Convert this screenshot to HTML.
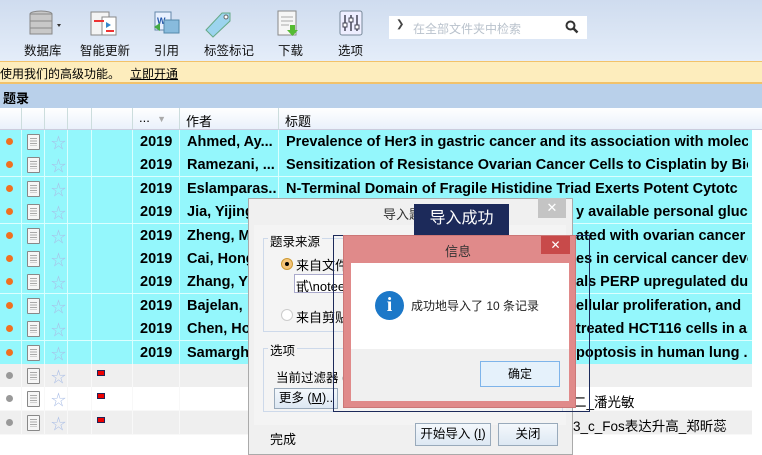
<!DOCTYPE html>
<html><head><meta charset="utf-8"><style>
*{margin:0;padding:0;box-sizing:border-box}
body{width:762px;height:455px;overflow:hidden;position:relative;background:#fff;font-family:"Liberation Sans","Noto Sans CJK SC",sans-serif;font-size:12px;color:#000}
.a{position:absolute}
.tb{left:0;top:0;width:762px;height:61px;background:linear-gradient(#cfdcef,#e4edf9)}
.tl{position:absolute;top:40px;font-size:12.5px;color:#111;white-space:nowrap}
.row{position:absolute;left:0;width:752px;height:24px;border-bottom:1px solid #dcffff;background:#94f7fc}
.g{background:#efefef;border-bottom:1px solid #f8f8f8}
.w{background:#fff;border-bottom:1px solid #f8f8f8}
.c{position:absolute;top:0;height:100%;border-right:1px solid #d8ffff}
.g .c,.w .c{border-color:#f8f8f8}
.t{position:absolute;top:4px;font-weight:bold;font-size:14.5px;white-space:nowrap;overflow:hidden}
.dot{position:absolute;left:6px;top:8px;width:7px;height:7px;border-radius:50%;background:#f07020}
.g .dot,.w .dot{background:#999}
.doc{position:absolute;left:27px;top:4px;width:13px;height:16px;border:1px solid #888;border-radius:1px;background:#f6f6f6}
.doc:after{content:"";position:absolute;left:2px;top:3px;width:7px;height:8px;background:repeating-linear-gradient(#aaa 0 1px,transparent 1px 2.5px)}
.star{position:absolute;left:51px;top:2px;color:#a9bde6;font-size:15px}
.flag{position:absolute;left:97px;top:6px;width:8px;height:6px;background:#e00;border:1px solid #225}
.btn{position:absolute;border:1px solid #9ab;background:linear-gradient(#f4f8fc,#dde8f3);text-align:center;font-size:12px}
</style></head><body>
<div class="a tb"></div>
<svg class="a" style="left:0;top:0" width="380" height="40">
<g fill="#c8c8c8" stroke="#888"><ellipse cx="41" cy="14" rx="11" ry="3"/><rect x="30" y="14" width="22" height="7"/><rect x="30" y="21" width="22" height="7"/><rect x="30" y="28" width="22" height="6"/></g>
<path d="M57 24l4 0-2 3z" fill="#333"/>
<rect x="91" y="12" width="18" height="23" fill="#f4f4f4" stroke="#888"/><rect x="102" y="17" width="14" height="18" fill="#fff" stroke="#888"/><rect x="94" y="20" width="10" height="2" fill="#e33"/><rect x="106" y="30" width="8" height="2" fill="#e33"/><path d="M106 22l5 3-5 3z" fill="#38c"/>
<rect x="155" y="12" width="16" height="18" fill="#e8f0ff" stroke="#68a"/><text x="157" y="24" font-size="9" fill="#25a" font-weight="bold">W</text><rect x="164" y="20" width="15" height="13" fill="#8bd" stroke="#58a"/><path d="M154 27l6 -4v8z" fill="#4a4"/>
<path d="M206 30l16-17 8 0 0 8-17 16z" fill="#9cd4ee" stroke="#6a8"/><circle cx="226" cy="17" r="2" fill="#fff" stroke="#666"/>
<rect x="278" y="11" width="18" height="24" fill="#f6f6f6" stroke="#888"/><path d="M281 17h12M281 21h12M281 25h8" stroke="#aaa"/><path d="M290 25h5v5h3l-5.5 6-5.5-6h3z" fill="#5b3"/>
<rect x="340" y="11" width="22" height="24" rx="2" fill="#eef" stroke="#789"/><path d="M345 15v16M351 15v16M357 15v16" stroke="#445" stroke-width="1.5"/><rect x="343" y="23" width="4" height="4" fill="#fff" stroke="#445"/><rect x="349" y="18" width="4" height="4" fill="#fff" stroke="#445"/><rect x="355" y="25" width="4" height="4" fill="#fff" stroke="#445"/>
</svg>
<div class="tl" style="left:24px">数据库</div>
<div class="tl" style="left:80px">智能更新</div>
<div class="tl" style="left:154px">引用</div>
<div class="tl" style="left:204px">标签标记</div>
<div class="tl" style="left:278px">下载</div>
<div class="tl" style="left:338px">选项</div>
<div class="a" style="left:389px;top:16px;width:198px;height:23px;background:#fff"></div>
<div class="a" style="left:396px;top:19px;color:#444;font-size:10px">&#10095;</div>
<div class="a" style="left:413px;top:20px;color:#b9c2cc;font-size:12px">在全部文件夹中检索</div>
<svg class="a" style="left:565px;top:20px" width="14" height="14"><circle cx="5.5" cy="5.5" r="4" fill="none" stroke="#333" stroke-width="2"/><path d="M8.5 8.5l4 4" stroke="#333" stroke-width="2.5"/></svg>
<div class="a" style="left:0;top:61px;width:762px;height:23px;background:#fdedbd;border-top:1px solid #f2c26a;border-bottom:2px solid #f2c26a"></div>
<div class="a" style="left:0;top:65px;font-size:12px">使用我们的高级功能。 &nbsp;&nbsp;<u>立即开通</u></div>
<div class="a" style="left:0;top:84px;width:762px;height:24px;background:#b9d0ea"></div>
<div class="a" style="left:3px;top:88px;font-weight:bold;font-size:13px">题录</div>
<div class="a" style="left:0;top:108px;width:762px;height:22px;background:linear-gradient(#fff,#eaf1fb);border-bottom:1px solid #ccd">
<div class="c" style="left:0;width:22px;border-color:#cdd"></div><div class="c" style="left:22px;width:23px;border-color:#cdd"></div><div class="c" style="left:45px;width:23px;border-color:#cdd"></div><div class="c" style="left:68px;width:24px;border-color:#cdd"></div><div class="c" style="left:92px;width:41px;border-color:#cdd"></div><div class="c" style="left:133px;width:47px;border-color:#cdd"></div><div class="c" style="left:180px;width:99px;border-color:#cdd"></div>
<div class="a" style="left:139px;top:2px;font-size:13px">... &nbsp;<span style="color:#aaa;font-size:9px">▼</span></div>
<div class="a" style="left:186px;top:3px;font-size:13px">作者</div>
<div class="a" style="left:285px;top:3px;font-size:13px">标题</div>
</div>

<div class="row" style="top:130px"><div class="c" style="left:0;width:22px"></div><div class="c" style="left:22px;width:23px"></div><div class="c" style="left:45px;width:23px"></div><div class="c" style="left:68px;width:24px"></div><div class="c" style="left:92px;width:41px"></div><div class="c" style="left:133px;width:47px"></div><div class="c" style="left:180px;width:99px"></div><div class="dot"></div><div class="doc"></div><div class="star">☆</div><div class="t" style="left:140px">2019</div><div class="t" style="left:187px;width:92px">Ahmed, Ay...</div><div class="t" style="left:286px;width:462px">Prevalence of Her3 in gastric cancer and its association with molec</div></div>
<div class="row" style="top:153px"><div class="c" style="left:0;width:22px"></div><div class="c" style="left:22px;width:23px"></div><div class="c" style="left:45px;width:23px"></div><div class="c" style="left:68px;width:24px"></div><div class="c" style="left:92px;width:41px"></div><div class="c" style="left:133px;width:47px"></div><div class="c" style="left:180px;width:99px"></div><div class="dot"></div><div class="doc"></div><div class="star">☆</div><div class="t" style="left:140px">2019</div><div class="t" style="left:187px;width:92px">Ramezani, ...</div><div class="t" style="left:286px;width:462px">Sensitization of Resistance Ovarian Cancer Cells to Cisplatin by Bio</div></div>
<div class="row" style="top:177px"><div class="c" style="left:0;width:22px"></div><div class="c" style="left:22px;width:23px"></div><div class="c" style="left:45px;width:23px"></div><div class="c" style="left:68px;width:24px"></div><div class="c" style="left:92px;width:41px"></div><div class="c" style="left:133px;width:47px"></div><div class="c" style="left:180px;width:99px"></div><div class="dot"></div><div class="doc"></div><div class="star">☆</div><div class="t" style="left:140px">2019</div><div class="t" style="left:187px;width:92px">Eslamparas..</div><div class="t" style="left:286px;width:462px">N-Terminal Domain of Fragile Histidine Triad Exerts Potent Cytotc</div></div>
<div class="row" style="top:200px"><div class="c" style="left:0;width:22px"></div><div class="c" style="left:22px;width:23px"></div><div class="c" style="left:45px;width:23px"></div><div class="c" style="left:68px;width:24px"></div><div class="c" style="left:92px;width:41px"></div><div class="c" style="left:133px;width:47px"></div><div class="c" style="left:180px;width:99px"></div><div class="dot"></div><div class="doc"></div><div class="star">☆</div><div class="t" style="left:140px">2019</div><div class="t" style="left:187px;width:92px">Jia, Yijing</div><div class="t" style="left:576px;width:172px">y available personal gluc</div></div>
<div class="row" style="top:224px"><div class="c" style="left:0;width:22px"></div><div class="c" style="left:22px;width:23px"></div><div class="c" style="left:45px;width:23px"></div><div class="c" style="left:68px;width:24px"></div><div class="c" style="left:92px;width:41px"></div><div class="c" style="left:133px;width:47px"></div><div class="c" style="left:180px;width:99px"></div><div class="dot"></div><div class="doc"></div><div class="star">☆</div><div class="t" style="left:140px">2019</div><div class="t" style="left:187px;width:92px">Zheng, M</div><div class="t" style="left:576px;width:172px">ated with ovarian cancer</div></div>
<div class="row" style="top:247px"><div class="c" style="left:0;width:22px"></div><div class="c" style="left:22px;width:23px"></div><div class="c" style="left:45px;width:23px"></div><div class="c" style="left:68px;width:24px"></div><div class="c" style="left:92px;width:41px"></div><div class="c" style="left:133px;width:47px"></div><div class="c" style="left:180px;width:99px"></div><div class="dot"></div><div class="doc"></div><div class="star">☆</div><div class="t" style="left:140px">2019</div><div class="t" style="left:187px;width:92px">Cai, Hong</div><div class="t" style="left:576px;width:172px">es in cervical cancer deve</div></div>
<div class="row" style="top:270px"><div class="c" style="left:0;width:22px"></div><div class="c" style="left:22px;width:23px"></div><div class="c" style="left:45px;width:23px"></div><div class="c" style="left:68px;width:24px"></div><div class="c" style="left:92px;width:41px"></div><div class="c" style="left:133px;width:47px"></div><div class="c" style="left:180px;width:99px"></div><div class="dot"></div><div class="doc"></div><div class="star">☆</div><div class="t" style="left:140px">2019</div><div class="t" style="left:187px;width:92px">Zhang, Y</div><div class="t" style="left:576px;width:172px">als PERP upregulated dui</div></div>
<div class="row" style="top:294px"><div class="c" style="left:0;width:22px"></div><div class="c" style="left:22px;width:23px"></div><div class="c" style="left:45px;width:23px"></div><div class="c" style="left:68px;width:24px"></div><div class="c" style="left:92px;width:41px"></div><div class="c" style="left:133px;width:47px"></div><div class="c" style="left:180px;width:99px"></div><div class="dot"></div><div class="doc"></div><div class="star">☆</div><div class="t" style="left:140px">2019</div><div class="t" style="left:187px;width:92px">Bajelan,</div><div class="t" style="left:576px;width:172px">ellular proliferation, and</div></div>
<div class="row" style="top:317px"><div class="c" style="left:0;width:22px"></div><div class="c" style="left:22px;width:23px"></div><div class="c" style="left:45px;width:23px"></div><div class="c" style="left:68px;width:24px"></div><div class="c" style="left:92px;width:41px"></div><div class="c" style="left:133px;width:47px"></div><div class="c" style="left:180px;width:99px"></div><div class="dot"></div><div class="doc"></div><div class="star">☆</div><div class="t" style="left:140px">2019</div><div class="t" style="left:187px;width:92px">Chen, Ho</div><div class="t" style="left:576px;width:172px">treated HCT116 cells in a.</div></div>
<div class="row" style="top:341px"><div class="c" style="left:0;width:22px"></div><div class="c" style="left:22px;width:23px"></div><div class="c" style="left:45px;width:23px"></div><div class="c" style="left:68px;width:24px"></div><div class="c" style="left:92px;width:41px"></div><div class="c" style="left:133px;width:47px"></div><div class="c" style="left:180px;width:99px"></div><div class="dot"></div><div class="doc"></div><div class="star">☆</div><div class="t" style="left:140px">2019</div><div class="t" style="left:187px;width:92px">Samargh</div><div class="t" style="left:576px;width:172px">poptosis in human lung .</div></div>
<div class="row g" style="top:364px"><div class="c" style="left:0;width:22px"></div><div class="c" style="left:22px;width:23px"></div><div class="c" style="left:45px;width:23px"></div><div class="c" style="left:68px;width:24px"></div><div class="c" style="left:92px;width:41px"></div><div class="c" style="left:133px;width:47px"></div><div class="c" style="left:180px;width:99px"></div><div class="dot"></div><div class="doc"></div><div class="star">☆</div><div class="flag"></div></div>
<div class="row w" style="top:387px"><div class="c" style="left:0;width:22px"></div><div class="c" style="left:22px;width:23px"></div><div class="c" style="left:45px;width:23px"></div><div class="c" style="left:68px;width:24px"></div><div class="c" style="left:92px;width:41px"></div><div class="c" style="left:133px;width:47px"></div><div class="c" style="left:180px;width:99px"></div><div class="dot"></div><div class="doc"></div><div class="star">☆</div><div class="flag"></div><div class="a" style="left:573px;top:4px;font-size:13.5px">二_潘光敏</div></div>
<div class="row g" style="top:411px"><div class="c" style="left:0;width:22px"></div><div class="c" style="left:22px;width:23px"></div><div class="c" style="left:45px;width:23px"></div><div class="c" style="left:68px;width:24px"></div><div class="c" style="left:92px;width:41px"></div><div class="c" style="left:133px;width:47px"></div><div class="c" style="left:180px;width:99px"></div><div class="dot"></div><div class="doc"></div><div class="star">☆</div><div class="flag"></div><div class="a" style="left:573px;top:4px;font-size:13.5px">3_c_Fos表达升高_郑昕蕊</div></div>

<div class="a" style="left:248px;top:198px;width:325px;height:257px;background:#f0f0f0;border:1px solid #aaa"></div>
<div class="a" style="left:383px;top:204px;font-size:13px;color:#333">导入题录</div>
<div class="a" style="left:538px;top:198px;width:28px;height:20px;background:#c4c4c4;color:#fff;text-align:center;font-size:13px;line-height:20px">✕</div>
<div class="a" style="left:254px;top:225px;width:312px;height:200px;background:#f4f4f4"></div>
<div class="a" style="left:263px;top:238px;width:300px;height:94px;border:1px solid #cdd9ea"></div>
<div class="a" style="left:268px;top:231px;background:#f4f4f4;font-size:12.5px;padding:0 2px">题录来源</div>
<div class="a" style="left:281px;top:258px;width:12px;height:12px;border-radius:50%;background:#f5c478;border:1px solid #c93"></div><div class="a" style="left:285px;top:262px;width:4px;height:4px;border-radius:50%;background:#000"></div>
<div class="a" style="left:296px;top:255px;font-size:13px">来自文件</div>
<div class="a" style="left:294px;top:274px;width:60px;height:19px;background:#fff;border:1px solid #aac"></div>
<div class="a" style="left:296px;top:276px;font-size:13px">甙\noteez</div>
<div class="a" style="left:281px;top:309px;width:12px;height:12px;border-radius:50%;border:1px solid #ccc;background:#fff"></div>
<div class="a" style="left:296px;top:307px;font-size:13px">来自剪贴</div>
<div class="a" style="left:263px;top:348px;width:300px;height:64px;border:1px solid #cdd9ea"></div>
<div class="a" style="left:268px;top:340px;background:#f4f4f4;font-size:12.5px;padding:0 2px">选项</div>
<div class="a" style="left:276px;top:367px;font-size:12.5px">当前过滤器 (</div>
<div class="btn" style="left:274px;top:388px;width:64px;height:21px;line-height:19px;font-size:12.5px">更多 (<u>M</u>)..</div>
<div class="a" style="left:270px;top:429px;font-size:13px">完成</div>
<div class="btn" style="left:415px;top:423px;width:76px;height:23px;line-height:21px;font-size:12.5px">开始导入 (<u>I</u>)</div>
<div class="btn" style="left:498px;top:423px;width:60px;height:23px;line-height:21px;font-size:12.5px">关闭</div>

<div class="a" style="left:414px;top:204px;width:95px;height:31px;background:#1c2a5a;color:#fff;font-size:16px;text-align:center;line-height:30px">导入成功</div>
<div class="a" style="left:333px;top:235px;width:257px;height:177px;border:1px solid #1c2a5a"></div>
<div class="a" style="left:343px;top:235px;width:233px;height:173px;background:#e08a8a;border:1px solid #c77"></div>
<div class="a" style="left:445px;top:241px;font-size:13px;color:#333">信息</div>
<div class="a" style="left:541px;top:236px;width:29px;height:18px;background:#c84a4a;color:#fff;text-align:center;line-height:18px;font-size:12px">✕</div>
<div class="a" style="left:351px;top:263px;width:218px;height:138px;background:#f0f0f0"></div>
<div class="a" style="left:351px;top:263px;width:218px;height:86px;background:#fff"></div>
<div class="a" style="left:375px;top:291px;width:29px;height:29px;border-radius:50%;background:#1c78c8;color:#fff;font-weight:bold;font-size:20px;text-align:center;line-height:29px;font-family:'Liberation Serif',serif">i</div>
<div class="a" style="left:411px;top:297px;font-size:12px;color:#222">成功地导入了 10 条记录</div>
<div class="btn" style="left:480px;top:361px;width:80px;height:26px;line-height:24px;border-color:#7eb4ea;background:#e5f1fb">确定</div>
</body></html>
